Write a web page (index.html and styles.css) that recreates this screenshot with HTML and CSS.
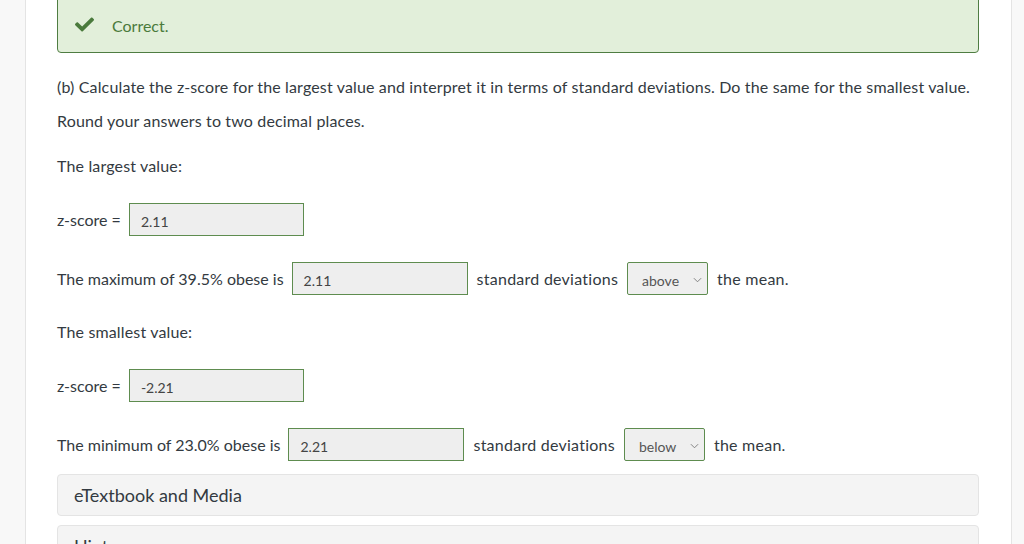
FILE: index.html
```html
<!DOCTYPE html>
<html lang="en">
<head>
<meta charset="utf-8">
<title>Question part b</title>
<link rel="stylesheet" href="styles.css">
</head>
<body>
<div class="page">
  <div class="feedback">
    <svg class="check" viewBox="0 0 512 512" width="19" height="19" aria-hidden="true"><path fill="#4a7a3c" d="M173.9 439.4l-166.4-166.4c-10-10-10-26.2 0-36.2l36.2-36.2c10-10 26.2-10 36.2 0L192 312.7 432.1 72.6c10-10 26.2-10 36.2 0l36.2 36.2c10 10 10 26.2 0 36.2l-294.4 294.4c-10 10-26.2 10-36.2 0z"/></svg>
    <span class="feedback-text">Correct.</span>
  </div>

  <p class="prompt">(b) Calculate the z-score for the largest value and interpret it in terms of standard deviations. Do the same for the smallest value. Round your answers to two decimal places.</p>

  <div class="label largest">The largest value:</div>
  <div class="row z-row"><span class="txt">z-score =</span><span class="input w175">2.11</span></div>
  <div class="row big-gap"><span class="txt">The maximum of 39.5% obese is</span><span class="input w176">2.11</span><span class="txt sd">standard deviations</span><span class="select"><span>above</span><svg viewBox="0 0 10 6" width="9" height="6"><path d="M1 1l4 4 4-4" fill="none" stroke="#777" stroke-width="1"/></svg></span><span class="txt sd">the mean.</span></div>

  <div class="label smallest">The smallest value:</div>
  <div class="row z-row"><span class="txt">z-score =</span><span class="input w175">-2.21</span></div>
  <div class="row min-row"><span class="txt">The minimum of 23.0% obese is</span><span class="input w176">2.21</span><span class="txt sd">standard deviations</span><span class="select"><span>below</span><svg viewBox="0 0 10 6" width="9" height="6"><path d="M1 1l4 4 4-4" fill="none" stroke="#777" stroke-width="1"/></svg></span><span class="txt sd">the mean.</span></div>

  <div class="panel first">eTextbook and Media</div>
  <div class="panel second">Hint</div>
</div>
</body>
</html>
```

FILE: styles.css
```css
html, body {
  margin: 0;
  padding: 0;
  height: 544px;
  overflow: hidden;
}
body {
  background: #f8f8f8;
  font-family: Lato, "Open Sans", Arial, sans-serif;
  color: #333a41;
}
.page {
  margin-left: 25px;
  width: 922px;
  height: 544px;
  background: #ffffff;
  border-left: 1px solid #e4e4e4;
  border-right: 1px solid #e4e4e4;
  padding: 0 32px 0 31px;
  overflow: hidden;
}
.feedback {
  margin-top: -14px;
  height: 67px;
  box-sizing: border-box;
  border: 1px solid #4f7d42;
  border-radius: 4px;
  background: #e2efda;
  display: flex;
  align-items: center;
  padding: 12px 0 0 17px;
}
.check {
  margin-top: -2px;
}
.feedback-text {
  margin-left: 18px;
  color: #4a7a3c;
  font-size: 16px;
}
.prompt {
  margin: 17px 0 0;
  font-size: 16px;
  line-height: 34px;
  letter-spacing: 0.15px;
}
.label {
  font-size: 16px;
  height: 24px;
  line-height: 24px;
  letter-spacing: 0.15px;
}
.largest { margin-top: 16px; }
.smallest { margin-top: 25px; }
.row {
  display: flex;
  align-items: center;
  height: 33px;
  font-size: 16px;
}
.z-row { margin-top: 25px; }
.big-gap { margin-top: 26px; }
.min-row { margin-top: 26px; }
.txt {
  white-space: nowrap;
  margin-right: 8px;
}
.sd {
  letter-spacing: 0.25px;
  margin-right: 9px;
}
.input {
  box-sizing: border-box;
  height: 33px;
  border: 1px solid #5e8c4f;
  background: #eeeeee;
  color: #444;
  font-size: 14px;
  display: flex;
  align-items: center;
  padding: 3px 0 0 11px;
  margin-right: 9px;
}
.w175 { width: 175px; }
.w176 { width: 176px; }
.select {
  box-sizing: border-box;
  width: 81px;
  height: 33px;
  border: 1px solid #5e8c4f;
  border-radius: 2px;
  background: #efefef;
  color: #555;
  font-size: 14px;
  display: flex;
  align-items: center;
  justify-content: space-between;
  padding: 3px 5px 0 14px;
  margin-right: 9px;
}
.panel {
  box-sizing: border-box;
  height: 42px;
  background: #f4f4f4;
  border: 1px solid #e4e4e4;
  border-radius: 4px;
  font-size: 18px;
  display: flex;
  align-items: center;
  padding-left: 16px;
}
.first { margin-top: 13px; }
.second { margin-top: 9px; }
```
